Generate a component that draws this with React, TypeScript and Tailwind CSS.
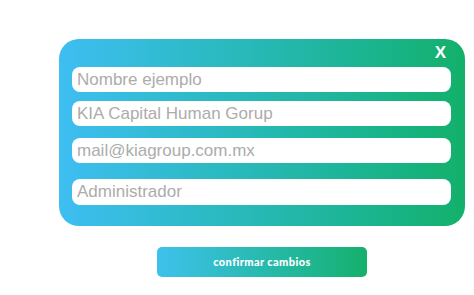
export default function App() {
  return (
    <main className="w-[474px] h-[295px] bg-white relative" style={{ fontFamily: '"Liberation Sans", Arial, sans-serif' }}>
      <div className="absolute left-[59px] top-[39px] w-[406px] h-[187px] rounded-[20px] bg-gradient-to-r from-[#3ebef2] via-[#26b8b4] to-[#13b06a]">
        <button className="absolute right-[19px] top-[5px] text-white font-bold text-[17px] leading-none">X</button>
        <div className="flex flex-col pl-[13px] pr-[14px] pt-[28px]">
          <input
            placeholder="Nombre ejemplo"
            className="h-[25px] rounded-[8px] bg-white px-[5px] text-[17px] text-gray-500 placeholder:text-[#acacac] outline-none"
          />
          <input
            placeholder="KIA Capital Human Gorup"
            className="mt-[9px] h-[25px] rounded-[8px] bg-white px-[5px] text-[17px] text-gray-500 placeholder:text-[#acacac] outline-none"
          />
          <input
            placeholder="mail@kiagroup.com.mx"
            className="mt-[12px] h-[25px] rounded-[8px] bg-white px-[5px] text-[17px] text-gray-500 placeholder:text-[#acacac] outline-none"
          />
          <input
            placeholder="Administrador"
            className="mt-[16px] h-[26px] rounded-[8px] bg-white px-[5px] text-[17px] text-gray-500 placeholder:text-[#acacac] outline-none"
          />
        </div>
      </div>
      <button
        className="absolute left-[157px] top-[247px] w-[210px] h-[30px] rounded-[5px] bg-gradient-to-r from-[#3ec1ec] to-[#15b06c] text-white text-[11px] font-black tracking-[0.4px]"
        style={{ fontFamily: 'Lato, "Open Sans", sans-serif' }}
      >
        confirmar cambios
      </button>
    </main>
  )
}
